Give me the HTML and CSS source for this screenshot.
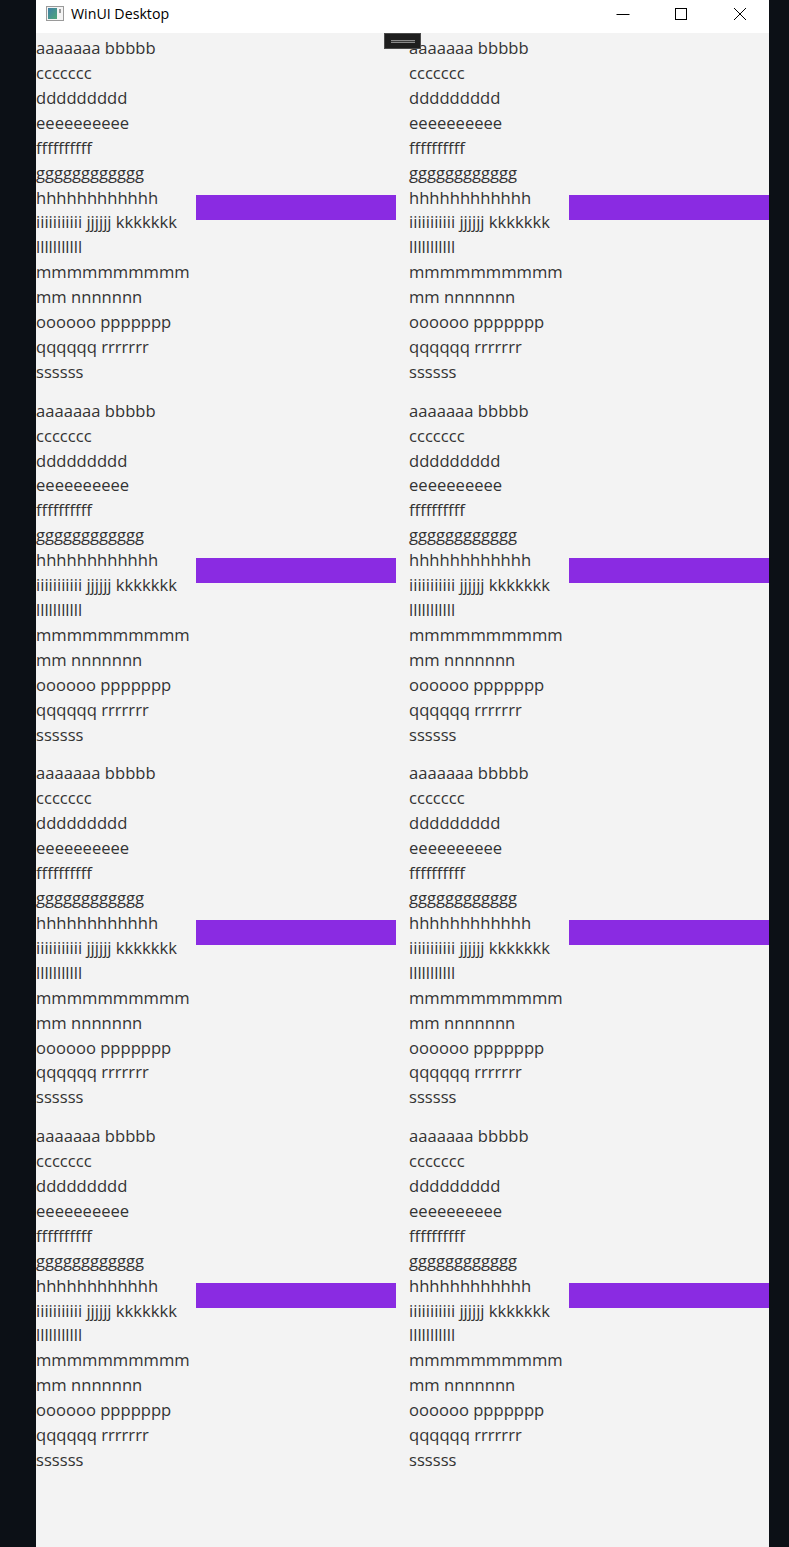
FILE: index.html
```html
<!DOCTYPE html>
<html>
<head>
<meta charset="utf-8">
<link rel="stylesheet" href="styles.css">
</head>
<body>
<div class="window">
  <div class="titlebar">
    <div class="app-icon">
      <svg width="18" height="15" viewBox="0 0 18 15">
        <defs>
          <linearGradient id="g" x1="0" y1="0" x2="1" y2="1">
            <stop offset="0" stop-color="#3f7fa8"/>
            <stop offset="1" stop-color="#4fa878"/>
          </linearGradient>
        </defs>
        <rect x="0.5" y="0.5" width="17" height="14" fill="#f4f4f4" stroke="#9a9a9a"/>
        <rect x="2" y="2" width="9" height="11" fill="url(#g)"/>
        <rect x="13" y="3" width="2" height="4" fill="#9a9a9a"/>
      </svg>
    </div>
    <div class="title">WinUI Desktop</div>
    <div class="caption">
      <div class="cap-btn"><svg width="14" height="14" viewBox="0 0 14 14"><line x1="0.5" y1="7.5" x2="13.5" y2="7.5" stroke="#000" stroke-width="1"/></svg></div>
      <div class="cap-btn"><svg width="14" height="14" viewBox="0 0 14 14"><rect x="1.5" y="1.5" width="11" height="11" fill="none" stroke="#000" stroke-width="1"/></svg></div>
      <div class="cap-btn"><svg width="14" height="14" viewBox="0 0 14 14"><path d="M1 1 L13 13 M13 1 L1 13" stroke="#000" stroke-width="1"/></svg></div>
    </div>
  </div>
  <div class="content" id="content"></div>
  <div class="debug-bar"><div class="debug-lines"></div></div>
</div>
<script>
  var lines = ["aaaaaaa bbbbb","ccccccc","ddddddddd","eeeeeeeeee","ffffffffff","gggggggggggg","hhhhhhhhhhhh","iiiiiiiiiii jjjjjj kkkkkkk","lllllllllll","mmmmmmmmmm","mm nnnnnnn","oooooo ppppppp","qqqqqq rrrrrrr","ssssss"];
  var html = "";
  for (var i = 0; i < 8; i++) {
    html += '<div class="cell"><div class="text">';
    for (var j = 0; j < lines.length; j++) html += '<div class="line">' + lines[j] + '</div>';
    html += '</div><div class="bar"></div></div>';
  }
  document.getElementById("content").innerHTML = html;
</script>
</body>
</html>
```
FILE: styles.css
```css
html, body {
  margin: 0;
  padding: 0;
  background: #0c1016;
}
body {
  width: 789px;
  height: 1547px;
  overflow: hidden;
}
.window {
  position: relative;
  margin-left: 36px;
  width: 733px;
  height: 1547px;
  background: #f3f3f3;
  overflow: hidden;
}
.titlebar {
  height: 33px;
  background: #ffffff;
  display: flex;
  align-items: flex-start;
}
.app-icon {
  height: 27px;
  display: flex;
  align-items: center;
  margin-left: 10px;
}
.app-icon svg { display: block; }
.title {
  height: 27px;
  line-height: 27px;
  margin-left: 7px;
  font-family: "Open Sans", "Noto Sans", sans-serif;
  font-size: 14.2px;
  color: #000;
}
.caption {
  margin-left: auto;
  display: flex;
}
.cap-btn {
  width: 58.5px;
  height: 28px;
  display: flex;
  align-items: center;
  justify-content: center;
}
.cap-btn svg { display: block; }
.content {
  display: grid;
  grid-template-columns: 373px 373px;
  row-gap: 10.8px;
}
.cell {
  display: flex;
  align-items: center;
}
.text {
  width: 160px;
  flex: none;
  padding-top: 3px;
  font-family: "Open Sans", "Noto Sans", sans-serif;
  font-size: 16.6px;
  line-height: 24.92px;
  color: #333333;
  white-space: nowrap;
}
.bar {
  width: 200px;
  height: 25px;
  flex: none;
  margin-bottom: 3px;
  background: #8a2be2;
}
.debug-bar {
  position: absolute;
  left: 348px;
  top: 33px;
  width: 35px;
  height: 14px;
  background: #1e1e1e;
  border: 1px solid #4c4c4c;
  display: flex;
  align-items: center;
  justify-content: center;
}
.debug-lines {
  width: 24px;
  height: 1px;
  border-top: 1px solid #8a8a8a;
  border-bottom: 1px solid #8a8a8a;
  background: #3a3a3a;
}
```
